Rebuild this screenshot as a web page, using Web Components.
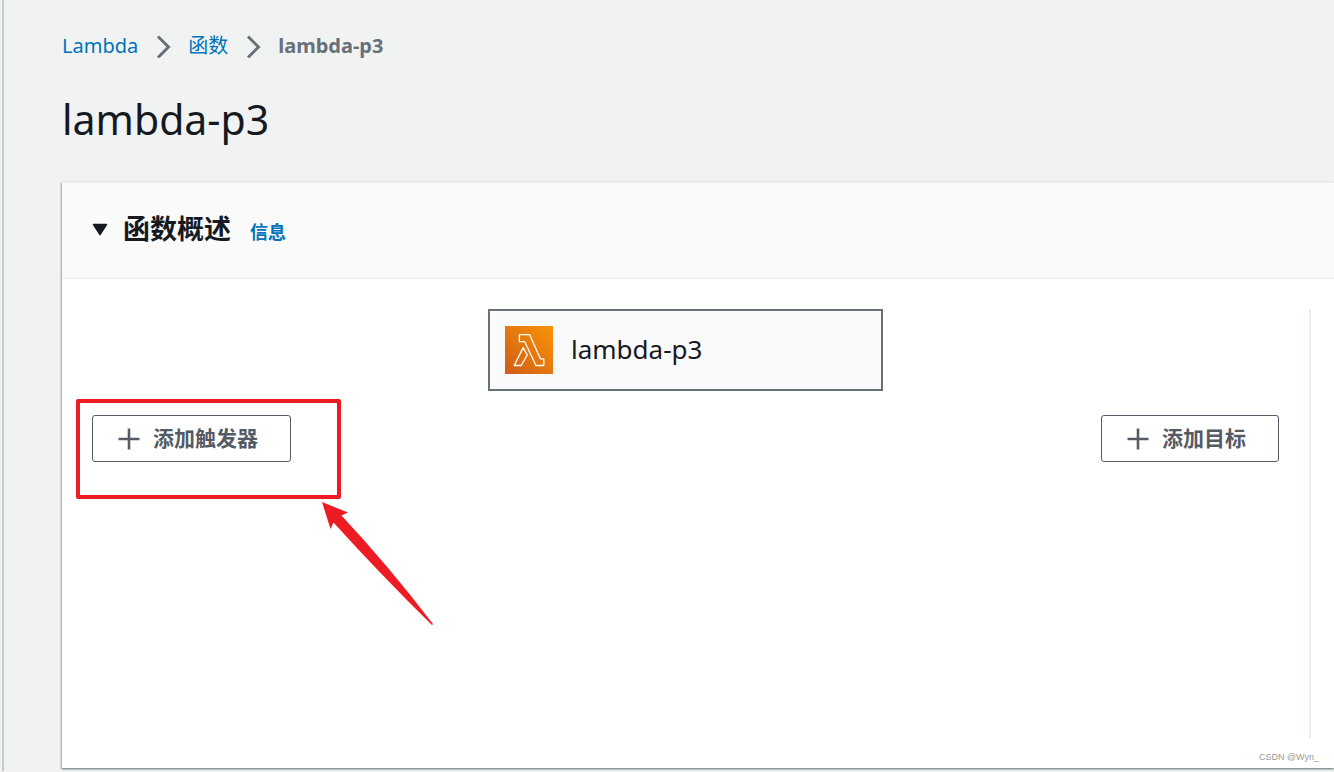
<!DOCTYPE html>
<html lang="zh-CN">
<head>
<meta charset="utf-8">
<title>lambda-p3</title>
<style>
  html { height: 100%; }
  body {
    margin: 0;
    min-height: 100%;
    background: #f1f3f3;
    color: #16191f;
    font-family: "Noto Sans", "Noto Sans CJK SC", sans-serif;
    font-size: 21px;
  }
</style>
</head>
<body>
<function-page></function-page>

<script>
const define = (name, html) => {
  const template = document.createElement('template');
  template.innerHTML = html;
  customElements.define(name, class extends HTMLElement {
    constructor() {
      super();
      this.attachShadow({ mode: 'open' }).append(template.content.cloneNode(true));
    }
  });
};

define('bread-crumbs', `
  <style>
    :host { display: block; font-size: 20px; line-height: 32px; }
    nav { display: flex; align-items: center; gap: 17px; }
    a { color: #0073bb; text-decoration: none; }
    strong { color: #687078; }
    svg { width: 16px; height: 24px; fill: none; stroke: #687078; stroke-width: 3; }
  </style>
  <nav aria-label="breadcrumb">
    <a href="#lambda">Lambda</a>
    <svg viewBox="0 0 16 24" aria-hidden="true"><path d="M3 2.500 13.500 13 3 23.500"/></svg>
    <a href="#functions">函数</a>
    <svg viewBox="0 0 16 24" aria-hidden="true"><path d="M3 2.500 13.500 13 3 23.500"/></svg>
    <strong aria-current="page">lambda-p3</strong>
  </nav>`);

define('section-panel', `
  <style>
    :host {
      display: block;
      background: #fff;
      border-top: 1px solid #eaeded;
      box-shadow: 0 1px 2px 0 rgba(0, 28, 36, .5), -1px 1px 2px 0 rgba(0, 28, 36, .2);
    }
    header {
      display: flex;
      align-items: center;
      gap: 15px;
      height: 96px;
      box-sizing: border-box;
      padding: 0 30px 4px;
      background: #fafafa;
      border-bottom: 1px solid #eaeded;
    }
    .body { padding: 30px 23px 30px 30px; }
    button { display: flex; padding: 0; border: 0; background: none; }
    svg { width: 16px; height: 14px; fill: #16191f; stroke: #16191f; stroke-width: 1.500; stroke-linejoin: round; }
    .title { display: flex; align-items: baseline; gap: 19px; }
  </style>
  <header>
    <button type="button" aria-label="函数概述" aria-expanded="true">
      <svg viewBox="0 0 16 14" aria-hidden="true"><path d="M1.500 2.500h13L8 12.500z"/></svg>
    </button>
    <div class="title"><slot name="title"></slot></div>
  </header>
  <div class="body"><slot></slot></div>`);

define('add-button', `
  <style>
    :host { display: block; }
    button {
      display: flex;
      align-items: center;
      gap: 13px;
      height: 47px;
      box-sizing: border-box;
      padding: 0 32px 0 25px;
      border: 1px solid #545b64;
      border-radius: 3px;
      background: #fff;
      color: #545b64;
      font: inherit;
      font-weight: 700;
      line-height: 32px;
      white-space: nowrap;
    }
    svg { width: 22px; height: 22px; stroke: #545b64; stroke-width: 2.600; }
    span { padding-bottom: 2px; }
  </style>
  <button type="button">
    <svg viewBox="0 0 22 22" aria-hidden="true"><path d="M11 .500v21M.500 11h21"/></svg>
    <span><slot></slot></span>
  </button>`);

define('function-node', `
  <style>
    :host {
      display: flex;
      align-items: center;
      gap: 18px;
      width: 395px;
      height: 82px;
      box-sizing: border-box;
      padding: 0 15px;
      border: 2px solid #687078;
      background: #fafafa;
      font-size: 26px;
      line-height: 40px;
    }
    svg { width: 48px; height: 48px; }
    span { padding-bottom: 2px; }
  </style>
  <svg viewBox="0 0 48 48" aria-hidden="true">
    <defs><linearGradient id="g" x1="0" y1="1" x2="1" y2="0">
      <stop offset="0" stop-color="#d05c17"/><stop offset="1" stop-color="#f89406"/>
    </linearGradient></defs>
    <path fill="url(#g)" d="M0 0h48v48H0z"/>
    <path fill="none" stroke="#fff" stroke-width="1.300" stroke-linejoin="round"
      d="M14.400 8.600H24.600L35.500 32.900H38.800V39.500H31L19.700 15.700H14.400zM18.200 21.600 22.300 29 16.200 39.500H9.200z"/>
  </svg>
  <span><slot></slot></span>`);

define('red-callout', `
  <style>
    :host { display: block; position: relative; }
    .frame {
      position: absolute;
      inset: -16px -50px -37px -16px;
      border: 4px solid #ed1c24;
      border-radius: 2px;
      pointer-events: none;
    }
    svg { position: absolute; left: calc(100% + 30px); top: 86px; width: 114px; height: 126px; fill: #ed1c24; pointer-events: none; }
  </style>
  <slot></slot>
  <div class="frame"></div>
  <svg viewBox="0 0 114 126" aria-hidden="true"><path d="M1 1 27 11.500 20.500 14.500Q66 63 112 123L111 124Q60 74 12.500 21.500L9.500 28z"/></svg>`);

define('function-diagram', `
  <style>
    :host { display: block; }
    .canvas {
      display: flex;
      flex-direction: column;
      gap: 24px;
      min-height: 429px;
      padding-right: 30px;
      border-right: 2px solid #eaeded;
    }
    function-node { align-self: center; }
    .row { display: flex; justify-content: space-between; align-items: flex-start; }
  </style>
  <div class="canvas">
    <function-node>lambda-p3</function-node>
    <div class="row">
      <red-callout><add-button>添加触发器</add-button></red-callout>
      <add-button>添加目标</add-button>
    </div>
  </div>`);

define('function-page', `
  <style>
    :host { display: block; position: relative; margin-left: 2px; border-left: 2px solid #c4cccc; }
    main { padding: 30px 0 3px 58px; }
    h1 { margin: 28px 0 34px; font-size: 41px; line-height: 58px; font-weight: 400; }
    h2 { margin: 0; font-size: 27px; line-height: 40px; font-weight: 700; }
    .info { color: #0073bb; font-size: 18px; font-weight: 700; text-decoration: none; }
    .credit { position: absolute; right: 15px; bottom: 8px; color: #999; font: 9px/12px "Liberation Sans", Arial, sans-serif; }
  </style>
  <main>
    <bread-crumbs></bread-crumbs>
    <h1>lambda-p3</h1>
    <section-panel>
      <h2 slot="title">函数概述</h2>
      <a slot="title" class="info" href="#info">信息</a>
      <function-diagram></function-diagram>
    </section-panel>
  </main>
  <span class="credit">CSDN @Wyn_</span>`);
</script>
</body>
</html>
